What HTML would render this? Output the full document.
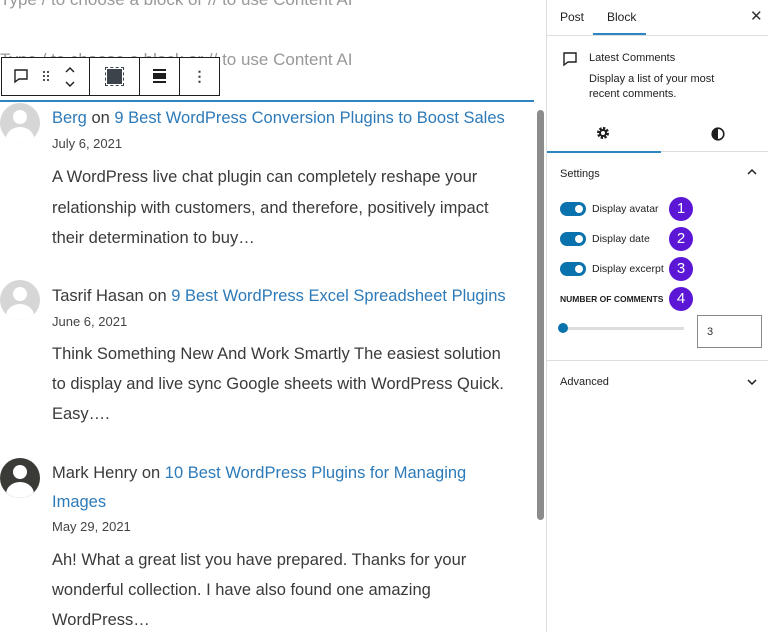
<!DOCTYPE html>
<html><head><style>
*{margin:0;padding:0;box-sizing:border-box}
body{width:768px;height:632px;overflow:hidden;background:#fff;font-family:"Liberation Sans",sans-serif;position:relative;color:#333}
.a{position:absolute;white-space:nowrap}
.ph{color:#999;font-size:17px}
.t{font-size:16.5px;color:#3a3a3a}
.l{color:#2d7ab8}
.d{font-size:13px;color:#444}
.av{position:absolute;left:0;width:40px;height:40px;border-radius:50%;background:#d6d6d6;overflow:hidden}
.av::before{content:"";position:absolute;left:13px;top:7px;width:14px;height:14px;border-radius:50%;background:#fff}
.av::after{content:"";position:absolute;left:6px;top:24px;width:28px;height:24px;border-radius:50%;background:#fff}
.s{font-size:11px;color:#1e1e1e}
.tg{position:absolute;left:560px;width:26px;height:14px;border-radius:7px;background:#0a72ad}
.tg::after{content:"";position:absolute;right:3px;top:3px;width:8px;height:8px;border-radius:50%;background:#fff}
.n{position:absolute;left:669px;width:24px;height:24px;border-radius:50%;background:#5b16d6;color:#fff;font-size:15px;text-align:center;line-height:24px}
</style></head><body>
<div class="a ph" style="left:0;top:-10px">Type / to choose a block or // to use Content AI</div>
<div class="a ph" style="left:0;top:50px">Type / to choose a block or // to use Content AI</div>
<div class="a" style="left:1px;top:57px;width:219px;height:39px;border:1px solid #1e1e1e;background:#fff;display:flex">
 <div style="width:88px;border-right:1px solid #1e1e1e;position:relative">
  <svg class="a" style="left:11px;top:10px" width="16" height="16" viewBox="0 0 16 16"><path d="M2 2h12v9H6l-4 3z" fill="none" stroke="#1e1e1e" stroke-width="1.4"/></svg>
  <svg class="a" style="left:40px;top:12px" width="8" height="12"><g fill="#1e1e1e"><circle cx="2" cy="2" r="1"/><circle cx="6" cy="2" r="1"/><circle cx="2" cy="6" r="1"/><circle cx="6" cy="6" r="1"/><circle cx="2" cy="10" r="1"/><circle cx="6" cy="10" r="1"/></g></svg>
  <svg class="a" style="left:62px;top:7px" width="12" height="24"><path d="M2 7l4-4 4 4M2 17l4 4 4-4" fill="none" stroke="#1e1e1e" stroke-width="1.4"/></svg>
 </div>
 <div style="width:50px;border-right:1px solid #1e1e1e;position:relative"><div class="a" style="left:17px;top:11px;width:15px;height:15px;background:#3c434a;outline:1px dashed #3c434a;outline-offset:1px"></div></div>
 <div style="width:40px;border-right:1px solid #1e1e1e;position:relative"><div class="a" style="left:13px;top:11px;width:13px;height:2px;background:#1e1e1e"></div><div class="a" style="left:13px;top:15px;width:13px;height:6px;background:#1e1e1e"></div><div class="a" style="left:13px;top:23px;width:13px;height:2px;background:#1e1e1e"></div></div>
 <div style="flex:1;position:relative;text-align:center;line-height:36px;font-weight:bold;font-size:14px">⋮</div>
</div>
<div class="a" style="left:0;top:100px;width:534px;height:2px;background:#2d85c4"></div>
<div class="a" style="left:537px;top:110px;width:7px;height:410px;background:#8c8c8c;border-radius:4px"></div>

<div class="av" style="top:103px"></div>
<div class="a t" style="left:52px;top:109px"><span class="l">Berg</span> on <span class="l">9 Best WordPress Conversion Plugins to Boost Sales</span></div>
<div class="a d" style="left:52px;top:136px">July 6, 2021</div>
<div class="a t" style="left:52px;top:162px;line-height:30.5px">A WordPress live chat plugin can completely reshape your<br>relationship with customers, and therefore, positively impact<br>their determination to buy…</div>

<div class="av" style="top:280px"></div>
<div class="a t" style="left:52px;top:287px">Tasrif Hasan on <span class="l">9 Best WordPress Excel Spreadsheet Plugins</span></div>
<div class="a d" style="left:52px;top:314px">June 6, 2021</div>
<div class="a t" style="left:52px;top:339px;line-height:30px">Think Something New And Work Smartly The easiest solution<br>to display and live sync Google sheets with WordPress Quick.<br>Easy….</div>

<div class="av" style="top:458px;background:#3a3a36"></div>
<div class="a t" style="left:52px;top:459px;line-height:29px">Mark Henry on <span class="l">10 Best WordPress Plugins for Managing<br>Images</span></div>
<div class="a d" style="left:52px;top:519px">May 29, 2021</div>
<div class="a t" style="left:52px;top:545px;line-height:30px">Ah! What a great list you have prepared. Thanks for your<br>wonderful collection. I have also found one amazing<br>WordPress…</div>

<div class="a" style="left:546px;top:0;width:1px;height:632px;background:#ddd"></div>
<div class="a s" style="left:560px;top:10px;font-size:12px">Post</div>
<div class="a s" style="left:607px;top:10px;font-size:12px">Block</div>
<div class="a" style="left:593px;top:33px;width:53px;height:2px;background:#2d85c4"></div>
<div class="a" style="left:750px;top:7px;font-size:15px">✕</div>
<div class="a" style="left:547px;top:35px;width:221px;height:1px;background:#ddd"></div>
<svg class="a" style="left:562px;top:51px" width="16" height="16" viewBox="0 0 16 16"><path d="M2 2h12v9H6l-4 3z" fill="none" stroke="#1e1e1e" stroke-width="1.4"/></svg>
<div class="a s" style="left:589px;top:52px">Latest Comments</div>
<div class="a s" style="left:589px;top:72px;line-height:15px">Display a list of your most<br>recent comments.</div>
<svg class="a" style="left:596px;top:126px" width="14" height="14" viewBox="0 0 14 14"><circle cx="7" cy="7" r="4.5" fill="none" stroke="#1e1e1e" stroke-width="3" stroke-dasharray="2.2 1.3"/><circle cx="7" cy="7" r="3" fill="none" stroke="#1e1e1e" stroke-width="2"/></svg>
<svg class="a" style="left:711px;top:127px" width="14" height="14" viewBox="0 0 14 14"><circle cx="7" cy="7" r="5.8" fill="none" stroke="#1e1e1e" stroke-width="1.6"/><path d="M7 1a6 6 0 0 0 0 12z" fill="#1e1e1e"/></svg>
<div class="a" style="left:547px;top:151px;width:221px;height:1px;background:#ddd"></div>
<div class="a" style="left:547px;top:151px;width:114px;height:2px;background:#2d85c4"></div>
<div class="a s" style="left:560px;top:168px">Settings</div>
<svg class="a" style="left:746px;top:168px" width="12" height="8"><path d="M2 6l4-4 4 4" fill="none" stroke="#1e1e1e" stroke-width="1.5"/></svg>
<div class="tg" style="top:202px"></div><div class="a s" style="left:592px;top:203px;font-size:10.5px">Display avatar</div><div class="n" style="top:197px">1</div>
<div class="tg" style="top:232px"></div><div class="a s" style="left:592px;top:233px;font-size:10.5px">Display date</div><div class="n" style="top:227px">2</div>
<div class="tg" style="top:262px"></div><div class="a s" style="left:592px;top:263px;font-size:10.5px">Display excerpt</div><div class="n" style="top:257px">3</div>
<div class="a" style="left:560px;top:294px;font-size:8.5px;font-weight:bold;color:#1e1e1e">NUMBER OF COMMENTS</div><div class="n" style="top:287px">4</div>
<div class="a" style="left:562px;top:327px;width:122px;height:3px;background:#ddd"></div>
<div class="a" style="left:558px;top:323px;width:10px;height:10px;border-radius:50%;background:#0a72ad"></div>
<div class="a" style="left:697px;top:315px;width:65px;height:33px;border:1px solid #888;font-size:11px;padding:10px 0 0 9px">3</div>
<div class="a" style="left:547px;top:360px;width:221px;height:1px;background:#ddd"></div>
<div class="a s" style="left:560px;top:376px">Advanced</div>
<svg class="a" style="left:746px;top:378px" width="12" height="8"><path d="M2 2l4 4 4-4" fill="none" stroke="#1e1e1e" stroke-width="1.5"/></svg>
</body></html>
